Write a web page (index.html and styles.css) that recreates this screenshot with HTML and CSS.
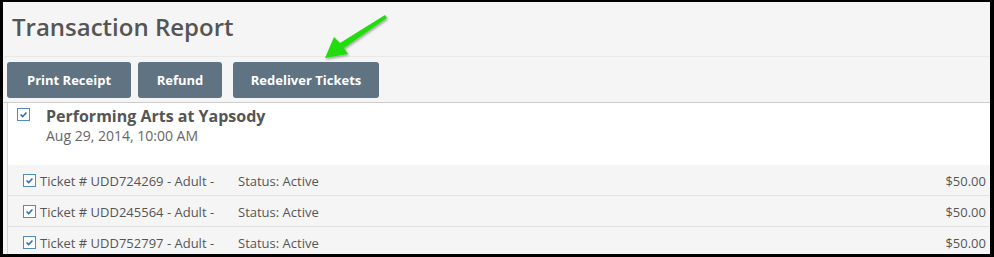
FILE: index.html
```html
<!DOCTYPE html>
<html>
<head>
<meta charset="utf-8">
<link rel="stylesheet" href="styles.css">
</head>
<body>
<div class="frame">
  <div class="page">
    <header class="head">
      <h1 class="title">Transaction Report</h1>
    </header>
    <div class="toolbar">
      <button class="btn b1">Print Receipt</button>
      <button class="btn b2">Refund</button>
      <button class="btn b3">Redeliver Tickets</button>
    </div>
    <section class="panel">
      <div class="event">
        <span class="cb big"><svg viewBox="0 0 13 13"><path d="M3 6.5 L5.5 9 L10 4" fill="none" stroke="#2a6fb5" stroke-width="1.8"/></svg></span>
        <div class="event-info">
          <div class="event-name">Performing Arts at Yapsody</div>
          <div class="event-date">Aug 29, 2014, 10:00 AM</div>
        </div>
      </div>
      <div class="tickets">
        <div class="row">
          <span class="cb"><svg viewBox="0 0 13 13"><path d="M3 6.5 L5.5 9 L10 4" fill="none" stroke="#2a6fb5" stroke-width="1.8"/></svg></span>
          <span class="tno">Ticket # UDD724269 - Adult -</span>
          <span class="status">Status: Active</span>
          <span class="price">$50.00</span>
        </div>
        <div class="row">
          <span class="cb"><svg viewBox="0 0 13 13"><path d="M3 6.5 L5.5 9 L10 4" fill="none" stroke="#2a6fb5" stroke-width="1.8"/></svg></span>
          <span class="tno">Ticket # UDD245564 - Adult -</span>
          <span class="status">Status: Active</span>
          <span class="price">$50.00</span>
        </div>
        <div class="row">
          <span class="cb"><svg viewBox="0 0 13 13"><path d="M3 6.5 L5.5 9 L10 4" fill="none" stroke="#2a6fb5" stroke-width="1.8"/></svg></span>
          <span class="tno">Ticket # UDD752797 - Adult -</span>
          <span class="status">Status: Active</span>
          <span class="price">$50.00</span>
        </div>
      </div>
    </section>
    <svg class="arrow" viewBox="0 0 80 60" width="80" height="60">
      <defs>
        <filter id="sh" x="-20%" y="-20%" width="140%" height="140%">
          <feDropShadow dx="1" dy="1.5" stdDeviation="1.2" flood-color="#000" flood-opacity="0.35"/>
        </filter>
      </defs>
      <polygon points="66,10 68,13 25,43 29,49 6,53 15,32 21,38" fill="#22dd11" filter="url(#sh)"/>
    </svg>
  </div>
</div>
</body>
</html>
```
FILE: styles.css
```css
* { box-sizing: border-box; }
html, body { margin: 0; padding: 0; }
body {
  background: #000;
  width: 994px;
  height: 257px;
  overflow: hidden;
  font-family: "Open Sans", "Noto Sans", sans-serif;
}
.frame {
  padding: 2px 4px 3px 3px;
  height: 257px;
}
.page {
  position: relative;
  background: #f5f5f5;
  height: 252px;
  overflow: hidden;
}
.head {
  height: 55px;
  border-bottom: 1px solid #e9e9e9;
  padding: 8px 0 0 9px;
}
.title {
  margin: 0;
  font-size: 24px;
  font-weight: 600;
  color: #555;
  line-height: 34px;
}
.toolbar {
  display: flex;
  gap: 7px;
  padding: 5px 0 0 4px;
  height: 46px;
  border-bottom: 1px solid #cdcdcd;
}
.btn {
  height: 36px;
  border: none;
  border-radius: 3px;
  background: #5f7382;
  color: #fff;
  font-family: "Open Sans", "Noto Sans", sans-serif;
  font-weight: 700;
  font-size: 13px;
  padding: 0;
}
.b1 { width: 124px; }
.b2 { width: 84px; }
.b3 { width: 146px; margin-left: 4px; }
.panel {
  margin-left: 4px;
  border-left: 1px solid #d5d5d5;
  background: #fff;
  height: 160px;
}
.event {
  display: flex;
  height: 62px;
  padding: 3px 0 0 9px;
}
.cb {
  display: inline-block;
  width: 13px;
  height: 13px;
  border: 1px solid #4d8cc9;
  background: #fff;
  flex: none;
}
.cb svg { display: block; width: 11px; height: 11px; }
.big { margin-top: 2px; }
.event-info { margin-left: 16px; }
.event-name {
  font-size: 16px;
  font-weight: 700;
  color: #555;
  line-height: 20px;
}
.event-date {
  font-size: 14px;
  color: #666;
  line-height: 20px;
}
.tickets { background: #f5f5f5; }
.row {
  display: flex;
  align-items: center;
  height: 31px;
  padding: 1px 4px 0 15px;
  border-bottom: 1px solid #e2e2e2;
  font-size: 13px;
  color: #555;
}
.tno { margin-left: 4px; width: 198px; }
.status { flex: 1; }
.price { text-align: right; }
.arrow {
  position: absolute;
  left: 316px;
  top: 3px;
}
```
